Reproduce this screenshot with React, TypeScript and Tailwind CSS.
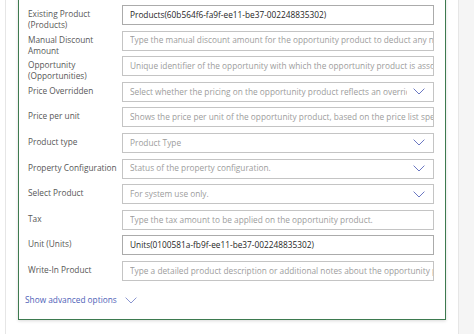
import React from 'react'

type Row = {
  label: string[]
  text: string
  value?: boolean
  select?: boolean
}

const rows: Row[] = [
  { label: ['Existing Product', '(Products)'], text: 'Products(60b564f6-fa9f-ee11-be37-002248835302)', value: true },
  { label: ['Manual Discount', 'Amount'], text: 'Type the manual discount amount for the opportunity product to deduct any negative amount.' },
  { label: ['Opportunity', '(Opportunities)'], text: 'Unique identifier of the opportunity with which the opportunity product is associated.' },
  { label: ['Price Overridden'], text: 'Select whether the pricing on the opportunity product reflects an override of the product catalog standard price.', select: true },
  { label: ['Price per unit'], text: 'Shows the price per unit of the opportunity product, based on the price list specified on the parent opportunity.' },
  { label: ['Product type'], text: 'Product Type', select: true },
  { label: ['Property Configuration'], text: 'Status of the property configuration.', select: true },
  { label: ['Select Product'], text: 'For system use only.', select: true },
  { label: ['Tax'], text: 'Type the tax amount to be applied on the opportunity product.' },
  { label: ['Unit (Units)'], text: 'Units(0100581a-fb9f-ee11-be37-002248835302)', value: true },
  { label: ['Write-In Product'], text: 'Type a detailed product description or additional notes about the opportunity product, such as manufacturing details.' },
]

const Chevron = ({ className = '' }: { className?: string }) => (
  <svg width="12" height="7" viewBox="0 0 12 7" className={className} fill="none">
    <path d="M0.6 0.6 L6 6 L11.4 0.6" stroke="currentColor" strokeWidth="1" />
  </svg>
)

const Field = ({ row }: { row: Row }) => (
  <div className="flex h-[20px] items-start">
    <div className="w-[94px] shrink-0 pt-[3px] text-[8.3px] leading-[11px] text-[#575757]">
      {row.label.map((l) => (
        <div key={l} className="whitespace-nowrap">{l}</div>
      ))}
    </div>
    <div
      className={
        'flex h-[20px] flex-1 items-center overflow-hidden border bg-white pl-[7px] ' +
        (row.value ? 'border-[#ababab]' : 'border-[#c4c4c4]')
      }
    >
      <span
        className={
          'flex-1 overflow-hidden whitespace-nowrap text-[8.3px] ' +
          (row.value ? 'text-[#262626]' : 'text-[#9c9c9c]')
        }
      >
        {row.text}
      </span>
      {row.select && (
        <span className="flex w-[26px] shrink-0 justify-center pr-[2px] text-[#6b78c2]">
          <Chevron />
        </span>
      )}
    </div>
  </div>
)

export default function App() {
  return (
    <div
      className="flex h-[334px] w-[474px] overflow-hidden bg-white"
      style={{ fontFamily: '"Open Sans", "Noto Sans", sans-serif' }}
    >
      <div className="w-[5px] shrink-0 bg-white" />
      <div className="flex w-[454px] shrink-0 flex-col border-x border-[#e6e6e6] bg-white px-[12px]">
        <div className="-mt-[12px] h-[332px] shrink-0 border-[1.5px] border-[#3d7a4f] bg-white pl-[9px] pr-[11px] pt-[16px] shadow-[0_1px_3px_rgba(0,0,0,0.15)]">
          <div className="flex flex-col gap-[5.6px]">
            {rows.map((r) => (
              <Field key={r.label.join(' ')} row={r} />
            ))}
          </div>
          <div className="mt-[13px] flex items-center gap-[8px] text-[8.3px] text-[#4e62b8]">
            <span className="-ml-[3px]">Show advanced options</span>
            <Chevron className="text-[#8a96d0]" />
          </div>
        </div>
      </div>
      <div className="flex-1 bg-[#f5f5f5]" />
    </div>
  )
}
